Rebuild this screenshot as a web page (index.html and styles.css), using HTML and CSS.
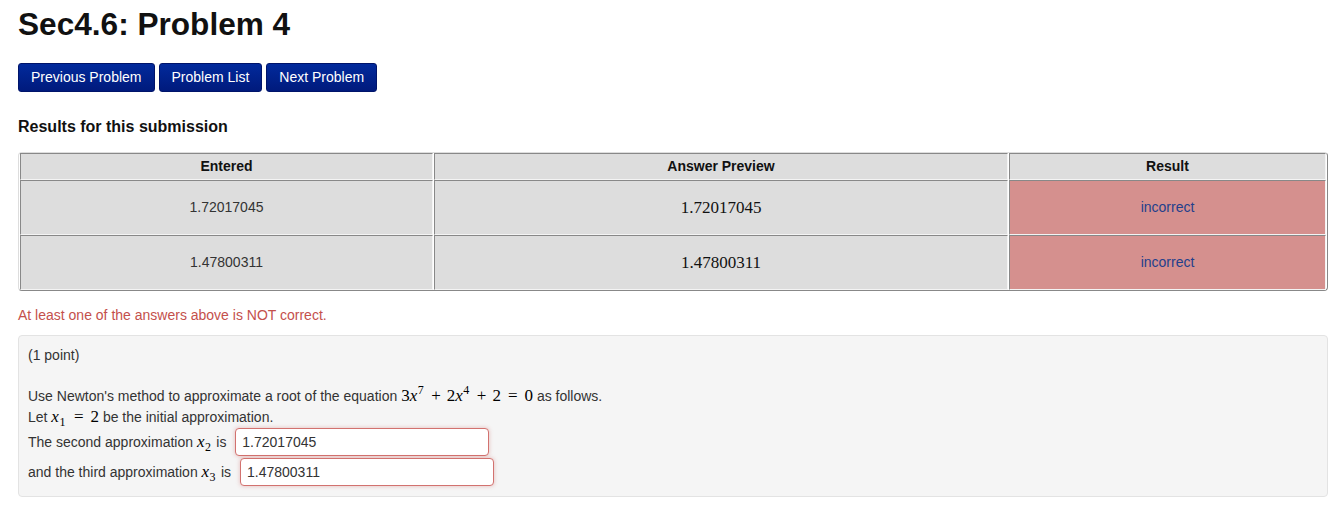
FILE: index.html
```html
<!DOCTYPE html>
<html lang="en">
<head>
<meta charset="utf-8">
<title>Sec4.6: Problem 4</title>
<link rel="stylesheet" href="styles.css">
</head>
<body>
<div class="page">
  <h1 class="title">Sec4.6: Problem 4</h1>
  <div class="nav">
    <a class="btn" href="#">Previous Problem</a>
    <a class="btn" href="#">Problem List</a>
    <a class="btn" href="#">Next Problem</a>
  </div>
  <h2 class="results-title">Results for this submission</h2>
  <table class="attempts">
    <thead>
      <tr>
        <th class="col-entered">Entered</th>
        <th class="col-preview">Answer Preview</th>
        <th>Result</th>
      </tr>
    </thead>
    <tbody>
      <tr>
        <td>1.72017045</td>
        <td class="preview">1.72017045</td>
        <td class="incorrect">incorrect</td>
      </tr>
      <tr>
        <td>1.47800311</td>
        <td class="preview">1.47800311</td>
        <td class="incorrect">incorrect</td>
      </tr>
    </tbody>
  </table>
  <div class="warning">At least one of the answers above is NOT correct.</div>
  <div class="problem">
    <div class="points">(1 point)</div>
    <div class="body">
      <div class="line">Use Newton's method to approximate a root of the equation <span class="math">3<i>x</i><sup>7</sup><span class="op">+</span>2<i>x</i><sup>4</sup><span class="op">+</span>2<span class="rel">=</span>0</span> as follows.</div>
      <div class="line">Let <span class="math"><i>x</i><sub>1</sub><span class="rel">=</span>2</span> be the initial approximation.</div>
      <div class="line input-line">The second approximation <span class="math"><i>x</i><sub>2</sub></span> is <input class="answer" type="text" value="1.72017045"></div>
      <div class="line input-line">and the third approximation <span class="math"><i>x</i><sub>3</sub></span> is <input class="answer" type="text" value="1.47800311"></div>
    </div>
  </div>
</div>
</body>
</html>
```
FILE: styles.css
```css
html, body {
  margin: 0;
  padding: 0;
  background: #fff;
}
body {
  font-family: "Liberation Sans", Arial, sans-serif;
  font-size: 14px;
  line-height: 20px;
  color: #333;
}
.page {
  padding: 4px 14px 0 18px;
}
.title {
  margin: 0;
  font-size: 31.6px;
  line-height: 40px;
  font-weight: bold;
  color: #111;
}
.nav {
  margin-top: 19px;
  display: flex;
  gap: 4px;
}
.btn {
  display: inline-block;
  padding: 4px 12px;
  line-height: 19px;
  font-size: 14px;
  color: #fff;
  text-decoration: none;
  background: linear-gradient(#022a9c, #001a7c);
  border: 1px solid #00146a;
  border-radius: 3px;
}
.results-title {
  margin: 25px 0 0;
  font-size: 16px;
  line-height: 20px;
  font-weight: bold;
  color: #111;
}
.attempts {
  margin-top: 15px;
  width: 100%;
  border-collapse: separate;
  border-spacing: 1px 0;
  border: 1px solid;
  border-color: #ddd #888 #888 #ddd;
  border-radius: 4px;
  text-align: center;
}
.attempts th,
.attempts td {
  background: #ddd;
  border: 1px solid;
  border-color: #888 #f4f4f4 #f4f4f4 #888;
  line-height: 17px;
  font-size: 14px;
}
.attempts th {
  padding: 4px 0;
  font-weight: bold;
  color: #111;
}
.attempts td {
  padding: 18px 0;
  color: #333;
}
.col-entered {
  width: 411px;
}
.col-preview {
  width: 572px;
}
.attempts td.preview {
  font-family: "Liberation Serif", "Times New Roman", serif;
  font-size: 17px;
  color: #111;
}
.attempts td.incorrect {
  background: #d5908e;
  color: #233f8c;
}
.warning {
  margin-top: 14px;
  color: #c4504c;
  font-size: 14px;
  line-height: 20px;
}
.problem {
  margin-top: 10px;
  background: #f5f5f5;
  border: 1px solid #e3e3e3;
  border-radius: 4px;
  padding: 9px 9px 8px;
}
.points {
  line-height: 20px;
}
.body {
  margin-top: 21px;
}
.line {
  line-height: 21px;
  height: 21px;
  white-space: nowrap;
}
.input-line {
  line-height: 28px;
  height: 30px;
}
.math {
  font-family: "Liberation Serif", "Times New Roman", serif;
  font-size: 17px;
  line-height: 0;
  color: #000;
}
.math i {
  font-style: italic;
  padding-right: 0.5px;
}
.math sup,
.math sub {
  font-size: 12px;
  line-height: 0;
  padding-right: 1.5px;
}
.op {
  margin: 0 6px;
}
.rel {
  margin: 0 7px;
}
.answer {
  box-sizing: border-box;
  width: 254px;
  height: 28px;
  margin: 0 0 0 5px;
  padding: 0 6px;
  vertical-align: top;
  font-family: "Liberation Sans", Arial, sans-serif;
  font-size: 14px;
  color: #333;
  background: #fff;
  border: 1px solid #d2726f;
  border-radius: 4px;
  box-shadow: 0 0 4px rgba(200, 80, 76, 0.35);
}
```
